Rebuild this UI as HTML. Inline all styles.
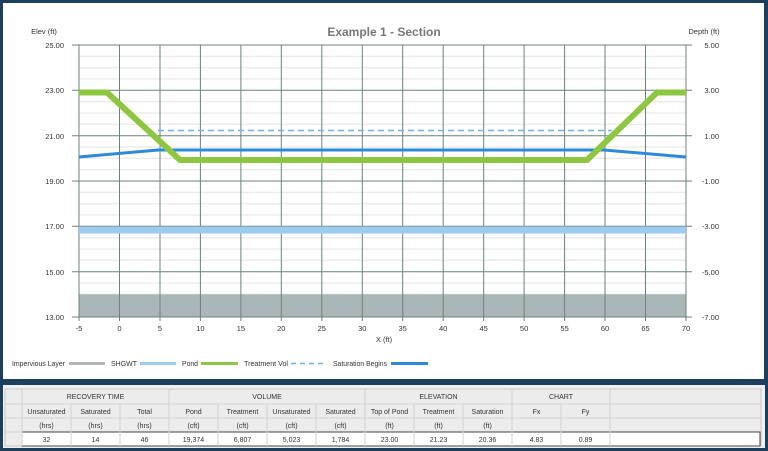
<!DOCTYPE html>
<html><head><style>
body{margin:0;width:768px;height:451px;background:#1d3f5e;overflow:hidden;font-family:"Liberation Sans",sans-serif;}
svg{position:absolute;left:0;top:0}
</style></head><body>
<svg width="768" height="451" viewBox="0 0 768 451" font-family="Liberation Sans, sans-serif">
<rect x="3" y="3" width="761" height="376" fill="#fff"/>
<text x="384" y="36" font-size="12" font-weight="bold" fill="#777" text-anchor="middle">Example 1 - Section</text>
<text x="44" y="34" font-size="7.5" fill="#333" text-anchor="middle">Elev (ft)</text>
<text x="704" y="34" font-size="7.5" fill="#333" text-anchor="middle">Depth (ft)</text>
<g stroke="#e3e3e3" stroke-width="1">
<path d="M79 56.3H686M79 67.7H686M79 79H686M79 101.7H686M79 113H686M79 124.3H686M79 147H686M79 158.3H686M79 169.7H686M79 192.3H686M79 203.7H686M79 215H686M79 237.7H686M79 249H686M79 260.3H686M79 283H686M79 294.3H686M79 305.7H686"/>
</g>
<rect x="79" y="294.3" width="607" height="22.7" fill="#a9b8b6"/>
<g stroke="#6f817d" stroke-width="1">
<path d="M72 45H692M72 90.3H692M72 135.7H692M72 181H692M72 226.3H692M72 271.7H692M72 317H692"/>
<path d="M79 45V321M119.5 45V321M160 45V321M200.4 45V321M240.9 45V321M281.3 45V321M321.8 45V321M362.3 45V321M402.7 45V321M443.2 45V321M483.7 45V321M524.1 45V321M564.6 45V321M605 45V321M645.5 45V321M686 45V321"/>
</g>
<line x1="79" y1="230" x2="686" y2="230" stroke="#9ccbf0" stroke-width="7"/>
<polyline points="79,157 158,150 604,150 686,157" fill="none" stroke="#2d8ad9" stroke-width="3"/>
<line x1="158" y1="130.5" x2="612" y2="130.5" stroke="#6fb2ec" stroke-width="1.5" stroke-dasharray="6,4"/>
<polyline points="79,92.5 107,92.5 180,160 587,160 657,92.5 686,92.5" fill="none" stroke="#8dc63f" stroke-width="6"/>
<g font-size="7.5" fill="#333" text-anchor="end">
<text x="64" y="48">25.00</text><text x="64" y="93">23.00</text><text x="64" y="139">21.00</text><text x="64" y="184">19.00</text><text x="64" y="229">17.00</text><text x="64" y="275">15.00</text><text x="64" y="320">13.00</text>
</g>
<g font-size="7.5" fill="#333" text-anchor="end">
<text x="719" y="48">5.00</text><text x="719" y="93">3.00</text><text x="719" y="139">1.00</text><text x="719" y="184">-1.00</text><text x="719" y="229">-3.00</text><text x="719" y="275">-5.00</text><text x="719" y="320">-7.00</text>
</g>
<g font-size="7.5" fill="#333" text-anchor="middle">
<text x="79" y="331">-5</text><text x="119.5" y="331">0</text><text x="160" y="331">5</text><text x="200.4" y="331">10</text><text x="240.9" y="331">15</text><text x="281.3" y="331">20</text><text x="321.8" y="331">25</text><text x="362.3" y="331">30</text><text x="402.7" y="331">35</text><text x="443.2" y="331">40</text><text x="483.7" y="331">45</text><text x="524.1" y="331">50</text><text x="564.6" y="331">55</text><text x="605" y="331">60</text><text x="645.5" y="331">65</text><text x="686" y="331">70</text>
<text x="384" y="342">X (ft)</text>
</g>
<g font-size="7" fill="#333">
<text x="12" y="366" textLength="53" lengthAdjust="spacingAndGlyphs">Impervious Layer</text>
<line x1="69" y1="363.5" x2="105" y2="363.5" stroke="#b0b7b5" stroke-width="3"/>
<text x="111" y="366" textLength="26" lengthAdjust="spacingAndGlyphs">SHGWT</text>
<line x1="140" y1="363.5" x2="176" y2="363.5" stroke="#9ccbf0" stroke-width="3"/>
<text x="182" y="366" textLength="16" lengthAdjust="spacingAndGlyphs">Pond</text>
<line x1="201" y1="363.5" x2="238" y2="363.5" stroke="#8dc63f" stroke-width="3"/>
<text x="244" y="366" textLength="44" lengthAdjust="spacingAndGlyphs">Treatment Vol</text>
<line x1="291" y1="363.5" x2="327" y2="363.5" stroke="#6fb2ec" stroke-width="1.5" stroke-dasharray="5,4"/>
<text x="333" y="366" textLength="54" lengthAdjust="spacingAndGlyphs">Saturation Begins</text>
<line x1="391" y1="363.5" x2="428" y2="363.5" stroke="#2d8ad9" stroke-width="3"/>
</g>
<rect x="3" y="385" width="762" height="63" fill="#f0f0f0"/>
<rect x="5" y="389" width="756" height="57" fill="#ececec" stroke="#c8c8c8"/>
<rect x="22" y="432" width="738" height="14" fill="#fff" stroke="#444"/>
<g stroke="#d2d2d2" stroke-width="1">
<path d="M5 404H761M5 418H761M5 432H22"/>
<path d="M22 389V446M169 389V432M365 389V432M512 389V432M610 389V446"/>
<path d="M71 404V446M120 404V446M218 404V446M267 404V446M316 404V446M414 404V446M463 404V446M561 404V446M169 432V446M365 432V446M512 432V446"/>
</g>
<g font-size="7" fill="#333" text-anchor="middle">
<text x="95.5" y="399">RECOVERY TIME</text><text x="267" y="399">VOLUME</text><text x="438.5" y="399">ELEVATION</text><text x="561" y="399">CHART</text>
<text x="46.5" y="414">Unsaturated</text><text x="95.5" y="414">Saturated</text><text x="144.5" y="414">Total</text><text x="193.5" y="414">Pond</text><text x="242.5" y="414">Treatment</text><text x="291.5" y="414">Unsaturated</text><text x="340.5" y="414">Saturated</text><text x="389.5" y="414">Top of Pond</text><text x="438.5" y="414">Treatment</text><text x="487.5" y="414">Saturation</text><text x="536.5" y="414">Fx</text><text x="585.5" y="414">Fy</text>
<text x="46.5" y="428">(hrs)</text><text x="95.5" y="428">(hrs)</text><text x="144.5" y="428">(hrs)</text><text x="193.5" y="428">(cft)</text><text x="242.5" y="428">(cft)</text><text x="291.5" y="428">(cft)</text><text x="340.5" y="428">(cft)</text><text x="389.5" y="428">(ft)</text><text x="438.5" y="428">(ft)</text><text x="487.5" y="428">(ft)</text>
<text x="46.5" y="442">32</text><text x="95.5" y="442">14</text><text x="144.5" y="442">46</text><text x="193.5" y="442">19,374</text><text x="242.5" y="442">6,807</text><text x="291.5" y="442">5,023</text><text x="340.5" y="442">1,784</text><text x="389.5" y="442">23.00</text><text x="438.5" y="442">21.23</text><text x="487.5" y="442">20.36</text><text x="536.5" y="442">4.83</text><text x="585.5" y="442">0.89</text>
</g>
</svg>
</body></html>
